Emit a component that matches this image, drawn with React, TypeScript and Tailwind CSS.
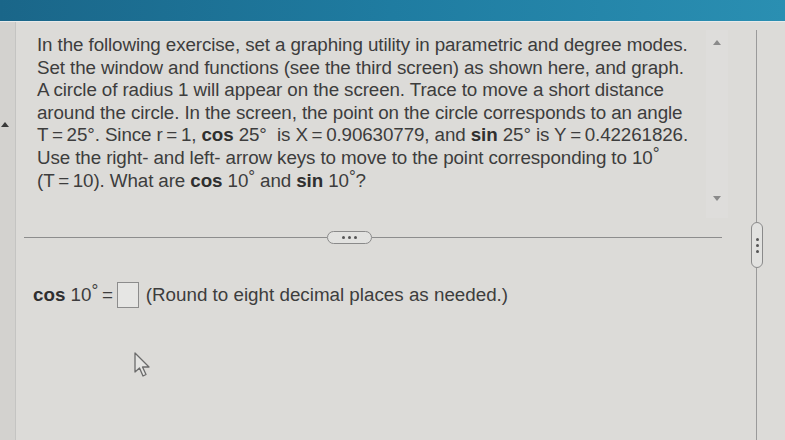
import { ReactNode } from 'react'

// Degree sign set a little above the digits, as the page renders it
const Deg = () => <span className="relative -top-[5px] text-[17px]">°</span>

const Line = ({ children }: { children: ReactNode }) => (
  <div className="whitespace-nowrap">{children}</div>
)

// thin spaces around "=" like the math renderer uses
const Eq = () => <>{'\u2009=\u2009'}</>

function Cursor() {
  return (
    <svg width="20" height="28" viewBox="0 0 20 28" fill="none">
      <path
        d="M2 1 L2 20 L6.5 16 L10 24 L13 22.5 L9.5 15 L16 15 Z"
        stroke="#6b6b6b"
        strokeWidth="1.3"
        strokeLinejoin="round"
        fill="#e4e4e2"
      />
    </svg>
  )
}

export default function App() {
  return (
    <div
      className="w-[785px] h-[440px] overflow-hidden bg-[#dcdbd8] text-[#3d3d3d]"
      style={{ fontFamily: '"Liberation Sans", Arial, sans-serif' }}
    >
      {/* top app bar */}
      <div className="h-[22px] bg-gradient-to-r from-[#1a6689] via-[#1f7ca1] to-[#2a8fb2] border-b border-[#e8eaea]" />

      <div className="flex h-[418px]">
        {/* left rail */}
        <div className="w-[16px] shrink-0 bg-[#d3d2cf] border-r border-[#c4c4c2] pt-[100px] pl-[1px]">
          <div className="w-0 h-0 border-l-[4px] border-r-[4px] border-b-[5px] border-l-transparent border-r-transparent border-b-[#3a3a3a]" />
        </div>

        {/* main question area */}
        <div className="flex-1 flex flex-col">
          <div className="flex h-[200px]">
            <div className="pl-[21px] pt-[12px] text-[18.8px] leading-[22.5px] tracking-[-0.1px]">
              <Line>In the following exercise, set a graphing utility in parametric and degree modes.</Line>
              <Line>Set the window and functions (see the third screen) as shown here, and graph.</Line>
              <Line>A circle of radius 1 will appear on the screen. Trace to move a short distance</Line>
              <Line>around the circle. In the screen, the point on the circle corresponds to an angle</Line>
              <Line>
                T<Eq />25°. Since r<Eq />1, <b className="text-[#2f2f2f]">cos</b> 25°&nbsp; is X<Eq />0.90630779, and{' '}
                <b className="text-[#2f2f2f]">sin</b> 25° is Y<Eq />0.42261826.
              </Line>
              <Line>
                Use the right- and left- arrow keys to move to the point corresponding to 10<Deg />
              </Line>
              <Line>
                (T<Eq />10). What are <b className="text-[#2f2f2f]">cos</b> 10<Deg /> and{' '}
                <b className="text-[#2f2f2f]">sin</b> 10<Deg />?
              </Line>
            </div>
            {/* scroll arrows */}
            <div className="ml-auto w-[22px] mr-[28px] mt-[8px] mb-[4px] bg-[#dedddb] flex flex-col items-center justify-between pt-[10px] pb-[17px]">
              <div className="w-0 h-0 border-l-[4px] border-r-[4px] border-b-[5px] border-l-transparent border-r-transparent border-b-[#8a8a8a]" />
              <div className="w-0 h-0 border-l-[4px] border-r-[4px] border-t-[5px] border-l-transparent border-r-transparent border-t-[#8a8a8a]" />
            </div>
          </div>

          {/* divider with more button */}
          <div className="flex items-center pl-[8px] pr-[34px] mt-[9px]">
            <div className="h-px bg-[#8d8d8d] w-[303px]" />
            <div className="w-[45px] h-[13px] rounded-full border border-[#8a8a8a] bg-[#e2e2e0] flex items-center justify-center gap-[3px]">
              <span className="w-[3px] h-[3px] rounded-full bg-[#555]" />
              <span className="w-[3px] h-[3px] rounded-full bg-[#555]" />
              <span className="w-[3px] h-[3px] rounded-full bg-[#555]" />
            </div>
            <div className="h-px bg-[#8d8d8d] flex-1" />
          </div>

          {/* answer row */}
          <div className="flex items-center pl-[17px] mt-[37px] text-[18.8px]">
            <span className="whitespace-nowrap">
              <b className="text-[#2f2f2f]">cos</b> 10<Deg />
              <Eq />
            </span>
            <span className="w-[22px] h-[26px] border border-[#8c8c8c] bg-[#e6e6e4]" />
            <span className="ml-[7px] whitespace-nowrap">(Round to eight decimal places as needed.)</span>
          </div>

          <div className="pl-[117px] mt-[43px]">
            <Cursor />
          </div>
        </div>

        {/* right rail */}
        <div className="w-[29px] shrink-0 flex flex-col items-start">
          <div className="w-px h-[192px] mt-[8px] bg-[#9a9a9a]" />
          <div className="-ml-[5px] w-[12px] h-[46px] rounded-full border border-[#8a8a8a] bg-[#e2e2e0] flex flex-col items-center justify-center gap-[3px]">
            <span className="w-[3px] h-[3px] rounded-full bg-[#555]" />
            <span className="w-[3px] h-[3px] rounded-full bg-[#555]" />
            <span className="w-[3px] h-[3px] rounded-full bg-[#555]" />
          </div>
          <div className="w-px flex-1 bg-[#9a9a9a]" />
        </div>
      </div>
    </div>
  )
}
